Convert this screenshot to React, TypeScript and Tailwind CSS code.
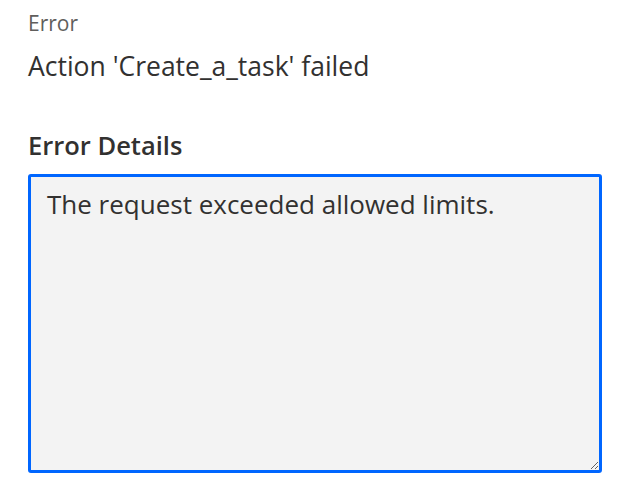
export default function App() {
  return (
    <div className="min-h-[494px] bg-white px-[28px] pt-[9px] font-['Open_Sans',sans-serif] text-[#323130]">
      <div className="text-[21px] leading-[28px] text-[#605e5c]">Error</div>
      <div className="mt-[12px] text-[26.5px] leading-[34px]">Action 'Create_a_task' failed</div>
      <div className="mt-[46px] text-[25.5px] font-semibold leading-[32px]">Error Details</div>
      <textarea
        readOnly
        defaultValue="The request exceeded allowed limits."
        className="mt-[13px] block h-[299px] w-[574px] rounded-[3px] border-[3px] border-[#0066ff] bg-[#f3f3f3] px-[16px] pt-[10px] pb-[10px] text-[26px] leading-[34px] text-[#323130] outline-none"
      />
    </div>
  );
}
